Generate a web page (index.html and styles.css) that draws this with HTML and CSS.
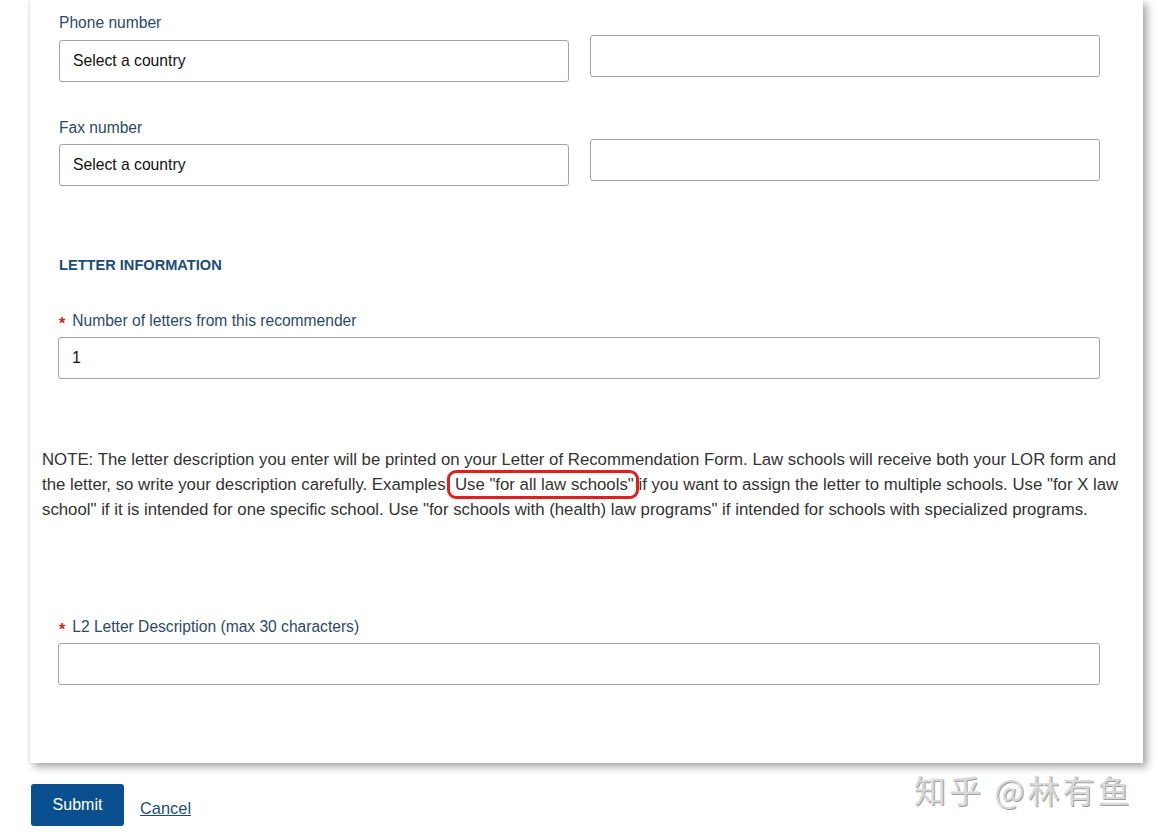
FILE: index.html
```html
<!DOCTYPE html>
<html lang="en">
<head>
<meta charset="utf-8">
<title>Recommender form</title>
<link rel="stylesheet" href="styles.css">
</head>
<body>
<div class="page">
  <form class="card">
    <div class="phone-row first">
      <div class="col">
        <label class="field-label">Phone number</label>
        <div class="box select-box">Select a country</div>
      </div>
      <div class="col col-right">
        <div class="box"></div>
      </div>
    </div>
    <div class="phone-row second">
      <div class="col">
        <label class="field-label fax-label">Fax number</label>
        <div class="box select-box">Select a country</div>
      </div>
      <div class="col col-right">
        <div class="box"></div>
      </div>
    </div>

    <h3 class="section-title">LETTER INFORMATION</h3>

    <div class="field count-field">
      <label class="field-label req-label"><span class="req">*</span>Number of letters from this recommender</label>
      <div class="box wide">1</div>
    </div>

    <p class="note">NOTE: The letter description you enter will be printed on your Letter of Recommendation Form. Law schools will receive both your LOR form and the letter, so write your description carefully. Examples: <span class="mark">Use "for all law schools"</span> if you want to assign the letter to multiple schools. Use "for X law school" if it is intended for one specific school. Use "for schools with (health) law programs" if intended for schools with specialized programs.</p>

    <div class="field desc-field">
      <label class="field-label req-label"><span class="req">*</span>L2 Letter Description (max 30 characters)</label>
      <div class="box wide"></div>
    </div>
  </form>

  <div class="actions">
    <button type="button" class="btn-submit">Submit</button>
    <a class="cancel" href="#">Cancel</a>
  </div>

  <div class="watermark">知乎 @林有鱼</div>
</div>
</body>
</html>
```
FILE: styles.css
```css
html, body {
  margin: 0;
  padding: 0;
  background: #ffffff;
}
body {
  font-family: "Liberation Sans", Arial, sans-serif;
  color: #222;
  width: 1158px;
  height: 834px;
  overflow: hidden;
}
.page {
  position: relative;
  height: 834px;
}
.card {
  margin-left: 30px;
  width: 1113px;
  box-sizing: border-box;
  background: #fff;
  padding: 12px 44px 78px 28px;
  box-shadow: 4px 4px 8px rgba(0, 0, 0, 0.35), -1px 0 3px rgba(0, 0, 0, 0.08);
}
.phone-row {
  display: grid;
  grid-template-columns: 510px 510px;
  column-gap: 21px;
  margin-left: 1px;
}
.phone-row.second {
  margin-top: 34px;
}
.col {
  display: flex;
  flex-direction: column;
}
.col-right {
  padding-top: 23px;
}
.field-label {
  display: flex;
  align-items: center;
  height: 20px;
  font-size: 15.6px;
  color: #2c4a68;
  margin-bottom: 8px;
  padding-top: 1px;
  box-sizing: border-box;
}
.fax-label {
  padding-top: 3px;
}
.req-label {
  padding-top: 3px;
}
.box {
  box-sizing: border-box;
  height: 42px;
  border: 1px solid #a3a3a3;
  border-radius: 3px;
  background: #fff;
  display: flex;
  align-items: center;
  padding-left: 13px;
  font-size: 16px;
  color: #111;
}
.select-box {
  font-size: 15.7px;
}
.wide {
  width: 1042px;
}
.section-title {
  margin: 70px 0 0 1px;
  height: 18px;
  line-height: 18px;
  font-size: 14.6px;
  font-weight: bold;
  color: #1b4d78;
}
.count-field {
  margin-top: 35px;
}
.req {
  color: #d42020;
  font-size: 16px;
  margin-right: 7px;
  margin-left: 1px;
  position: relative;
  top: 3px;
  font-weight: bold;
}
.note {
  margin: 68px 0 0 -16px;
  width: 1082px;
  font-size: 16.8px;
  line-height: 25px;
  color: #333;
}
.mark {
  outline: 3px solid #e0201c;
  outline-offset: 2px;
  border-radius: 4px;
  padding-left: 3px;
  margin-left: -3px;
}
.desc-field {
  margin-top: 93px;
}
.actions {
  display: flex;
  align-items: center;
  gap: 16px;
  margin: 21px 0 0 31px;
}
.btn-submit {
  width: 93px;
  height: 42px;
  border: none;
  border-radius: 3px;
  background: #0a4f8f;
  color: #fff;
  font-family: "Liberation Sans", Arial, sans-serif;
  font-size: 16px;
  padding: 0;
}
.cancel {
  color: #1b4d78;
  font-size: 16.4px;
  text-decoration: underline;
  margin-top: 7px;
}
.watermark {
  position: absolute;
  left: 914px;
  top: 766px;
  font-family: "Noto Sans CJK SC", sans-serif;
  font-size: 32px;
  color: #d8d8d8;
  letter-spacing: 3px;
  text-shadow: 1px 1px 0 #a0a0a0;
}
```
